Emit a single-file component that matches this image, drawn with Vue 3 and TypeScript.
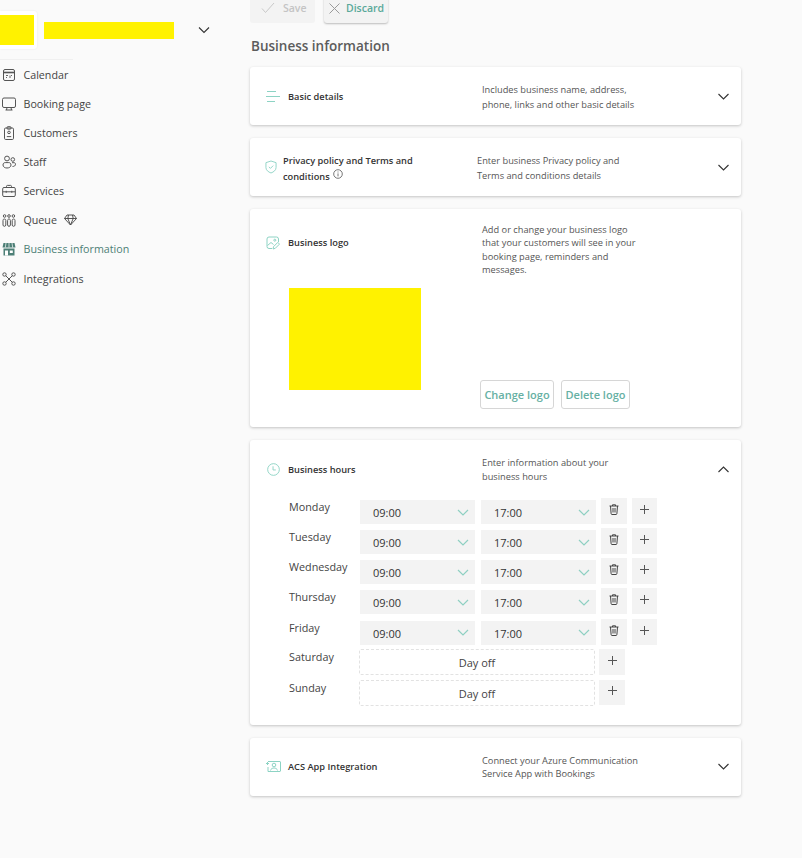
<script setup lang="ts">
type NavItem = { label: string; icon: string; active?: boolean; premium?: boolean }
type Day = { name: string; off?: boolean }

const navItems: NavItem[] = [
  { label: 'Calendar', icon: 'calendar' },
  { label: 'Booking page', icon: 'monitor' },
  { label: 'Customers', icon: 'badge' },
  { label: 'Staff', icon: 'people' },
  { label: 'Services', icon: 'briefcase' },
  { label: 'Queue', icon: 'queue', premium: true },
  { label: 'Business information', icon: 'store', active: true },
  { label: 'Integrations', icon: 'nodes' },
]

const days: Day[] = [
  { name: 'Monday' },
  { name: 'Tuesday' },
  { name: 'Wednesday' },
  { name: 'Thursday' },
  { name: 'Friday' },
  { name: 'Saturday', off: true },
  { name: 'Sunday', off: true },
]
</script>

<template>
  <div class="page">
    <aside class="sidebar">
      <div class="brand">
        <div class="brand-tile"><div class="brand-logo"></div></div>
        <div class="brand-name"></div>
        <svg class="brand-chevron" width="12" height="8" viewBox="0 0 12 8" fill="none" stroke="#333" stroke-width="1.100"><path d="M1 1.500l5 5 5-5"/></svg>
      </div>
      <div class="brand-rule"></div>
      <nav class="nav">
        <div v-for="item in navItems" :key="item.label" class="nav-item" :class="{ active: item.active }">
          <svg class="nav-icon" width="14" height="14" viewBox="0 0 14 14" fill="none" stroke="#555" stroke-width="1">
            <template v-if="item.icon === 'calendar'">
              <rect x="1.500" y="1.500" width="11" height="11" rx="1.500"/><path d="M1.500 4.500h11" stroke-width="1.600"/><path d="M4 7.500h2M4 9.500h1M8 7.500v2.500M10 7.500h-1" stroke-width=".9"/>
            </template>
            <template v-else-if="item.icon === 'monitor'">
              <rect x=".5" y="1" width="13" height="9.500" rx="1.500"/><path d="M5 10.500l-.5 2.500M9 10.500l.5 2.500M3.500 13h7"/>
            </template>
            <template v-else-if="item.icon === 'badge'">
              <rect x="2.500" y="2" width="9" height="11.500" rx="1.200"/><rect x="5" y=".7" width="4" height="2.400" rx=".8"/><circle cx="7" cy="6.400" r="1.300"/><path d="M4.800 10.600h4.400"/>
            </template>
            <template v-else-if="item.icon === 'people'">
              <circle cx="5" cy="3.500" r="2.400"/><circle cx="10.800" cy="4.500" r="1.800"/><path d="M1 10c0-1.600 1-2.400 2.200-2.400h3.600C8 7.600 9 8.400 9 10c0 2-2 3-4 3s-4-1-4-3z"/><path d="M10 7.700h2.200c.8 0 1.300.7 1.300 1.500 0 1.500-1.300 2.300-3 2.300"/>
            </template>
            <template v-else-if="item.icon === 'briefcase'">
              <rect x=".7" y="3.500" width="12.600" height="9" rx="1.300"/><path d="M4.500 3.500V2.300c0-.5.4-.9.9-.9h3.200c.5 0 .9.400.9.900v1.200M.7 7.800h12.600M4.200 6.800v2M9.800 6.800v2"/>
            </template>
            <template v-else-if="item.icon === 'queue'">
              <path d="M1 7.500c0-1 .6-1.500 1.400-1.500s1.400.5 1.400 1.500V12c0 .8-.6 1.300-1.400 1.300S1 12.800 1 12zM5.600 7.500C5.600 6.500 6.200 6 7 6s1.400.5 1.400 1.500V12c0 .8-.6 1.300-1.400 1.300s-1.400-.5-1.400-1.300zM10.200 7.500c0-1 .6-1.500 1.400-1.500s1.400.5 1.400 1.500V12c0 .8-.6 1.300-1.400 1.300s-1.400-.5-1.400-1.300z"/><circle cx="2.600" cy="3" r="1.300"/><circle cx="7" cy="3" r="1.300"/><circle cx="11.400" cy="3" r="1.300"/>
            </template>
            <template v-else-if="item.icon === 'store'">
              <path d="M1.500 1h11l1 4.500h-13z" fill="#4d7f76" stroke="none"/><path d="M1.500 6.500h11V13.500h-11z" fill="#4d7f76" stroke="none"/><path d="M4 1l-.7 4.500M7 1v4.500M10 1l.7 4.500" stroke="#fff" stroke-width=".7"/><path d="M3 8.500h3V13.500H3zM7.800 8.500h3v2.600h-3z" fill="#fff" stroke="none"/>
            </template>
            <template v-else>
              <circle cx="2.500" cy="2.500" r="1.700"/><circle cx="11.500" cy="2.500" r="1.700"/><circle cx="2.500" cy="11.500" r="1.700"/><circle cx="11.500" cy="11.500" r="1.700"/><path d="M3.700 3.700l6.600 6.600M10.300 3.700l-6.600 6.600"/>
            </template>
          </svg>
          <span>{{ item.label }}</span>
          <svg v-if="item.premium" class="gem" width="13" height="12" viewBox="0 0 13 12" fill="none" stroke="#444" stroke-width=".9"><path d="M3 1h7l2.500 3.500L6.500 11 .5 4.500zM.5 4.500h12M4.500 1 3.800 4.500 6.500 11l2.700-6.500L8.500 1"/></svg>
        </div>
      </nav>
    </aside>

    <main class="main">
      <div class="toolbar">
        <button type="button" class="tool-btn save">
          <svg width="14" height="12" viewBox="0 0 14 12" fill="none" stroke="#c9c9c9" stroke-width="1"><path d="M1 6.500 4.500 10.500 13 1"/></svg>
          Save
        </button>
        <button type="button" class="tool-btn discard">
          <svg width="11" height="11" viewBox="0 0 11 11" fill="none" stroke="#9a9a9a" stroke-width="1"><path d="M.5.500l10 10M10.500.500l-10 10"/></svg>
          Discard
        </button>
      </div>
      <h1 class="page-title">Business information</h1>

      <section class="card">
        <div class="head">
          <div class="head-icon">
            <svg width="14" height="11" viewBox="0 0 14 11" fill="none" stroke="#8dd3c4" stroke-width="1"><path d="M1 .5h9M0 5.500h14M1 10.500h8"/></svg>
          </div>
          <div class="title low">Basic details</div>
          <p class="desc tall">Includes business name, address,<br>phone, links and other basic details</p>
          <svg class="chevron" width="11" height="7" viewBox="0 0 11 7" fill="none" stroke="#333" stroke-width="1.100"><path d="M.5 1l5 5 5-5"/></svg>
        </div>
      </section>

      <section class="card">
        <div class="head">
          <div class="head-icon shifted">
            <svg width="12" height="14" viewBox="0 0 13 15" fill="none" stroke="#8dd3c4" stroke-width="1"><path d="M6.500 1 12 2.800V8c0 3-2.500 4.800-5.500 6C3.500 12.800 1 11 1 8V2.800z"/><path d="M4.200 7.300l1.700 1.700 3-3"/></svg>
          </div>
          <div class="title title-wide">Privacy policy and Terms and conditions
            <svg class="info" width="10" height="10" viewBox="0 0 10 10" fill="none" stroke="#555" stroke-width=".8"><circle cx="5" cy="5" r="4.300"/><path d="M5 4.400v3M5 2.500v1"/></svg>
          </div>
          <p class="desc tall">Enter business Privacy policy and<br>Terms and conditions details</p>
          <svg class="chevron" width="11" height="7" viewBox="0 0 11 7" fill="none" stroke="#333" stroke-width="1.100"><path d="M.5 1l5 5 5-5"/></svg>
        </div>
      </section>

      <section class="card logo-card">
        <div class="logo-left">
          <div class="logo-title">
            <div class="head-icon">
              <svg width="14" height="14" viewBox="0 0 14 14" fill="none" stroke="#8dd3c4" stroke-width="1"><path d="M6 12.500H3A2 2 0 0 1 1 10.500V3a2 2 0 0 1 2-2h7.500a2 2 0 0 1 2 2v3"/><circle cx="8.800" cy="4.200" r="1"/><path d="M1.500 9.500 5 6.500l2.500 2M7 13l.6-2.400 4.200-4.200 1.700 1.700-4.200 4.200z"/></svg>
            </div>
            <div class="title">Business logo</div>
          </div>
          <div class="logo-box"></div>
        </div>
        <div class="logo-right">
          <p class="desc">Add or change your business logo<br>that your customers will see in your<br>booking page, reminders and<br>messages.</p>
          <div class="logo-actions">
            <button type="button" class="logo-btn change">Change logo</button>
            <button type="button" class="logo-btn delete">Delete logo</button>
          </div>
        </div>
      </section>

      <section class="card">
        <div class="head">
          <div class="head-icon">
            <svg width="13" height="13" viewBox="0 0 14 14" fill="none" stroke="#8dd3c4" stroke-width="1"><circle cx="7" cy="7" r="6.300"/><path d="M6.500 3.500V7.500H9.500"/></svg>
          </div>
          <div class="title low">Business hours</div>
          <p class="desc">Enter information about your<br>business hours</p>
          <svg class="chevron" width="11" height="7" viewBox="0 0 11 7" fill="none" stroke="#333" stroke-width="1.100"><path d="M.5 6l5-5 5 5"/></svg>
        </div>
        <div class="hours">
          <div v-for="day in days" :key="day.name" class="hour-row">
            <div class="day-name" :class="{ 'day-name-off': day.off }">{{ day.name }}</div>
            <template v-if="!day.off">
              <div v-for="time in ['09:00', '17:00']" :key="time" class="time-select">
                <span>{{ time }}</span>
                <svg width="12" height="7" viewBox="0 0 12 7" fill="none" stroke="#8fd0c2" stroke-width="1.200"><path d="M1 1l5 5 5-5"/></svg>
              </div>
              <button type="button" class="square-btn trash">
                <svg width="10" height="11" viewBox="0 0 10 11" fill="none" stroke="#444" stroke-width="1"><path d="M.5 2h9M3.500 2V.8h3V2M1.500 2l.6 7.600c0 .5.400.9.900.9h4c.5 0 .9-.4.900-.9L8.500 2M4 4v4.500M6 4v4.500"/></svg>
              </button>
              <button type="button" class="square-btn">
                <svg width="9" height="9" viewBox="0 0 9 9" fill="none" stroke="#555" stroke-width="1"><path d="M4.500 0v9M0 4.500h9"/></svg>
              </button>
            </template>
            <template v-else>
              <div class="day-off">Day off</div>
              <button type="button" class="square-btn plus-off">
                <svg width="9" height="9" viewBox="0 0 9 9" fill="none" stroke="#555" stroke-width="1"><path d="M4.500 0v9M0 4.500h9"/></svg>
              </button>
            </template>
          </div>
        </div>
      </section>

      <section class="card">
        <div class="head">
          <div class="head-icon">
            <svg width="15" height="11" viewBox="0 0 15 11" fill="none" stroke="#8dd3c4" stroke-width="1"><path d="M2 .5h12a.6.6 0 0 1 .5.500v9a.6.6 0 0 1-.5.500H2"/><path d="M2 10.500V6"/><circle cx="8" cy="4" r="1.800"/><path d="M4.500 9.500c.5-2 2-2.500 3.500-2.500s3 .5 3.500 2.500"/><path d="M1.500 1v3M0 2.500h3"/></svg>
          </div>
          <div class="title">ACS App Integration</div>
          <p class="desc">Connect your Azure Communication<br>Service App with Bookings</p>
          <svg class="chevron" width="11" height="7" viewBox="0 0 11 7" fill="none" stroke="#333" stroke-width="1.100"><path d="M.5 1l5 5 5-5"/></svg>
        </div>
      </section>
    </main>
  </div>
</template>

<style>
html, body { background: #fafafa; overflow: hidden; }
</style>

<style scoped>
.page { display: flex; height: 858px; overflow: hidden; background: #fafafa; color: #333; font-family: "Open Sans", "Noto Sans", sans-serif; }
.sidebar { flex: 0 0 250px; }
.brand { display: flex; align-items: center; height: 59px; }
.brand-tile { display: flex; align-items: center; width: 37px; height: 38px; margin-top: 1px; background: #fff; border-radius: 0 3px 3px 0; box-shadow: 0 0 2px rgba(0, 0, 0, .08); }
.brand-logo { width: 34px; height: 30px; background: #fff200; }
.brand-name { width: 130px; height: 17px; margin-left: 7px; margin-top: 1px; background: #fff200; }
.brand-chevron { margin-left: 24px; margin-top: 1px; }
.brand-rule { width: 73px; height: 1px; background: #f0f0f0; }
.nav { display: flex; flex-direction: column; }
.nav-item { display: flex; align-items: center; height: 29.150px; padding-left: 2px; font-size: 10.700px; color: #444; }
.nav-item.active { color: #4d7f76; }
.nav-icon { flex: none; margin-right: 7.500px; }
.gem { margin-left: 7px; }
.main { flex: 0 0 491px; }
.toolbar { display: flex; gap: 9px; height: 30px; margin-top: -7px; }
.tool-btn { display: flex; align-items: center; gap: 8px; height: 30px; padding: 0 0 0 11px; border: none; border-radius: 3px; background: #f3f3f3; font: 600 10.500px "Open Sans", sans-serif; }
.save { width: 65px; color: #c4c4c4; }
.discard { width: 64px; gap: 6px; padding-left: 5px; color: #5aa99a; box-shadow: 0 1px 2px rgba(0, 0, 0, .25); }
.page-title { height: 30px; margin: 0; padding: 14px 0 0 1px; font-size: 13.500px; line-height: 18px; font-weight: 600; color: #5c5c5c; }
.card { margin-bottom: 13px; background: #fff; border-radius: 3px; box-shadow: 0 1px 3px rgba(0, 0, 0, .22); }
.head { display: flex; align-items: center; height: 58px; }
.head-icon { display: flex; flex: 0 0 22px; justify-content: center; margin-left: 12px; margin-right: 4px; }
.head-icon.shifted { flex-basis: 12px; margin-left: 15px; margin-right: 6px; }
.title { flex: 0 0 194px; font-size: 9.250px; font-weight: 600; line-height: 16px; color: #333; }
.title.low { padding-top: 2px; }
.title-wide { box-sizing: border-box; padding-top: 3px; padding-right: 60px; }
.info { vertical-align: 1px; margin-left: 1px; }
.desc { flex: 1; margin: 0; padding-top: 1px; font-size: 9.250px; line-height: 13.400px; color: #555; }
.desc.tall { padding-top: 3px; line-height: 14.200px; }
.chevron { flex: none; margin-right: 12.500px; }
.logo-card { display: flex; height: 218px; }
.logo-left { flex: 0 0 232px; }
.logo-title { display: flex; align-items: center; height: 18px; margin-top: 25px; }
.logo-box { width: 132px; height: 102px; margin: 36px 0 0 39px; background: #fff200; }
.logo-right { display: flex; flex-direction: column; flex: 1; padding: 13px 0 18px; }
.logo-actions { display: flex; gap: 7px; margin-top: auto; margin-left: -2px; }
.logo-btn { height: 29px; padding: 0; border: 1.500px solid #d6d6d6; border-radius: 3px; background: #fff; color: #66b0a3; font: 600 11px "Open Sans", sans-serif; }
.change { width: 74px; }
.delete { width: 69px; }
.hours { display: flex; flex-direction: column; padding: 0 0 19.250px 39px; }
.hour-row { display: flex; align-items: flex-start; height: 30.150px; }
.hour-row:nth-child(6) { height: 31px; }
.hour-row:last-child { height: 26px; }
.day-name { flex: 0 0 70px; font-size: 10.800px; line-height: 18px; color: #444; }
.day-name-off { margin-top: -1px; }
.time-select { display: flex; align-items: center; justify-content: space-between; box-sizing: border-box; width: 115px; height: 24px; margin: 2px 6px 0 1px; padding: 1px 6px 0 13px; background: #f3f3f3; font-size: 11px; color: #333; }
.time-select + .time-select { margin-left: 0; margin-right: 5px; }
.time-select svg { margin-top: -1px; }
.square-btn { display: flex; align-items: center; justify-content: center; flex: none; width: 25px; height: 26px; margin-right: 5px; padding: 0 0 3px; border: none; background: #f3f3f3; }
.trash { width: 26px; }
.plus-off { width: 26px; margin-left: 4px; }
.hour-row:last-child .plus-off { height: 25px; }
.day-off { display: flex; align-items: center; justify-content: center; box-sizing: border-box; flex: none; width: 236px; height: 26px; padding-top: 2px; border: 1px dashed #e2e2e2; border-radius: 2px; font-size: 11px; font-weight: 500; color: #444; }
</style>
